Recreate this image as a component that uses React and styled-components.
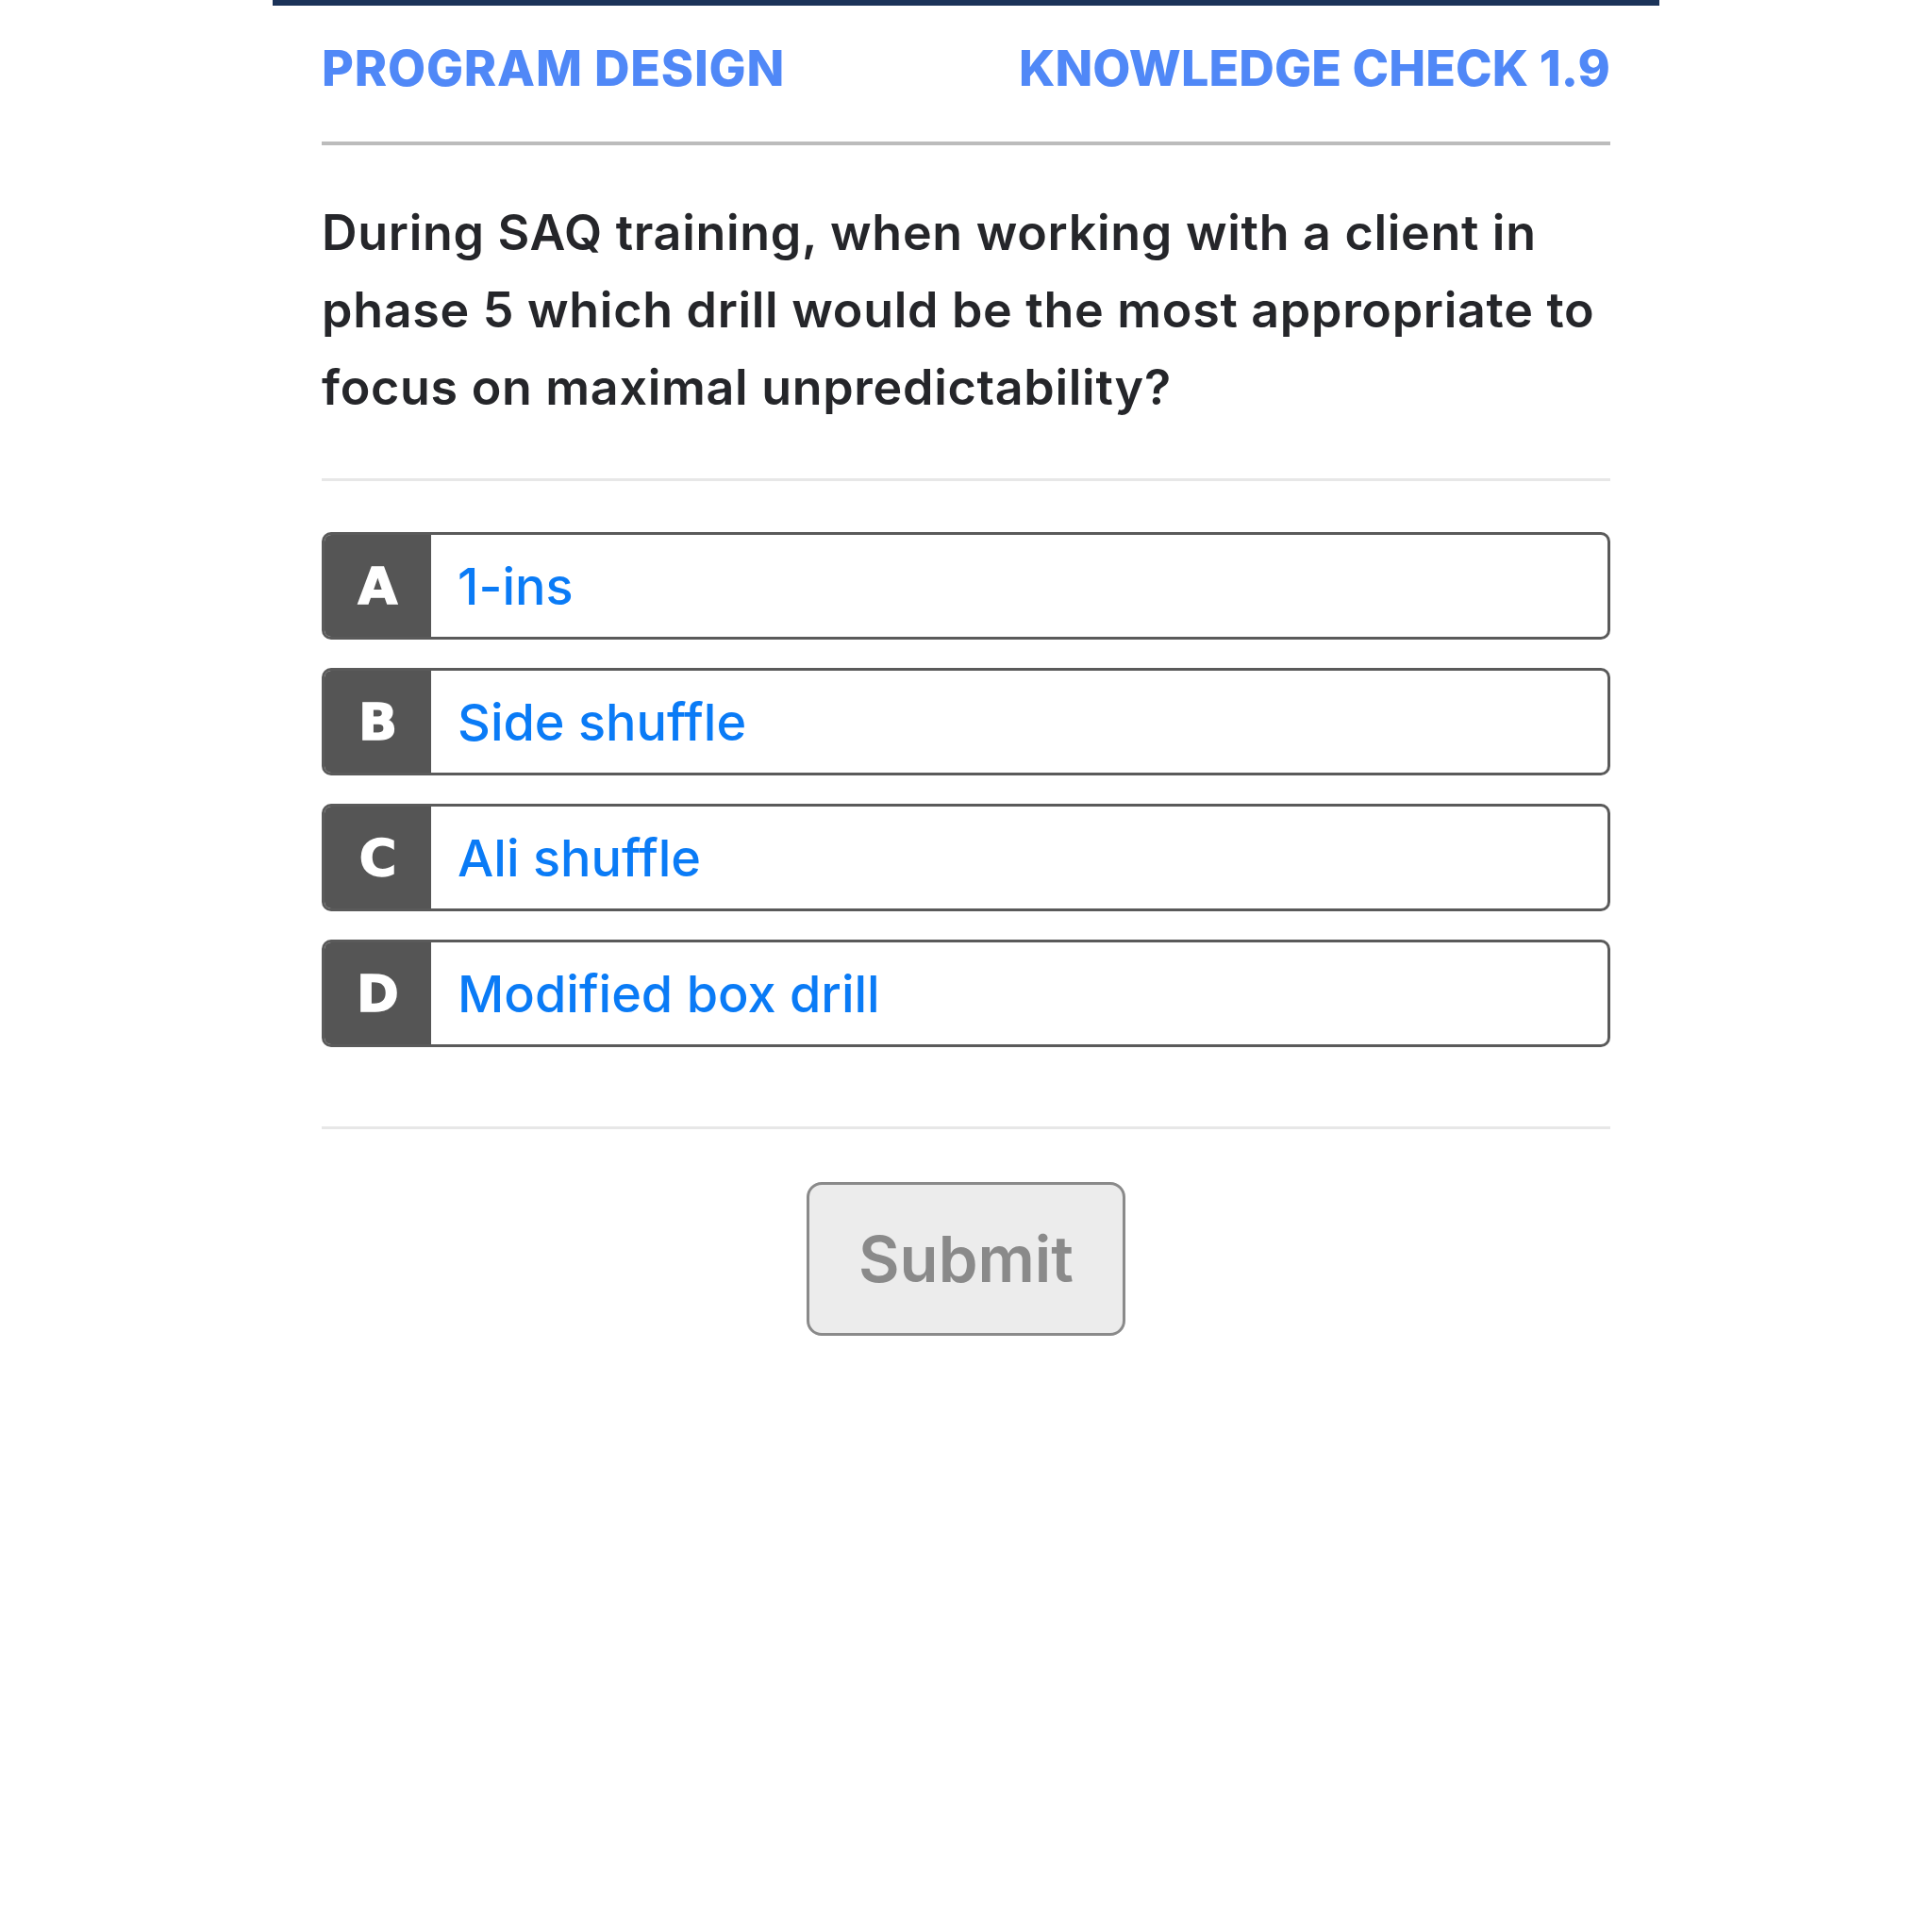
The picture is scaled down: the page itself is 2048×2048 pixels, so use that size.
import React from "react";
import styled, { createGlobalStyle } from "styled-components";

const Global = createGlobalStyle`
  html, body { margin: 0; padding: 0; background: #ffffff; }
  body { font-family: Inter, "Noto Sans", sans-serif; }
  * { box-sizing: border-box; }
`;

const Page = styled.div`
  width: 1470px;
  margin: 0 auto;
  border-top: 6px solid #1b3359;
  padding: 0 52px 120px;
`;

const Header = styled.header`
  display: flex;
  justify-content: space-between;
  align-items: center;
  padding: 35px 0 45px;
  border-bottom: 4px solid #bcbcbc;
`;

const HeaderTitle = styled.h1`
  margin: 0;
  font-family: Inter, "Noto Sans", sans-serif;
  font-weight: 800;
  font-size: 52px;
  line-height: 64px;
  letter-spacing: ${(p) => (p.$wide ? "0.8px" : "0.1px")};
  color: #5088f7;
  text-transform: uppercase;
`;

const Question = styled.p`
  margin: 0;
  padding: 52px 0 55px;
  font-family: Inter, "Noto Sans", sans-serif;
  font-weight: 600;
  font-size: 52px;
  line-height: 82px;
  letter-spacing: 0.7px;
  color: #25262a;
  border-bottom: 3px solid #e7e7e7;
`;

const OptionList = styled.div`
  display: flex;
  flex-direction: column;
  gap: 30px;
  padding: 54px 0 84px;
  border-bottom: 3px solid #e7e7e7;
`;

const Option = styled.button`
  display: flex;
  align-items: stretch;
  height: 114px;
  padding: 0;
  border: 3px solid #5a5a5a;
  border-radius: 10px;
  background: #ffffff;
  overflow: hidden;
  cursor: pointer;
  text-align: left;
`;

const Letter = styled.span`
  flex: 0 0 113px;
  display: flex;
  align-items: center;
  justify-content: center;
  background: #555555;
  color: #ffffff;
  font-family: "DejaVu Sans", sans-serif;
  font-weight: 700;
  font-size: 54px;
  -webkit-text-stroke: 1.5px #ffffff;
`;

const OptionText = styled.span`
  display: flex;
  align-items: center;
  padding-left: 28px;
  font-family: Inter, "Noto Sans", sans-serif;
  font-weight: 500;
  font-size: 54px;
  color: #0a7bf6;
`;

const Actions = styled.div`
  display: flex;
  justify-content: center;
  padding-top: 56px;
`;

const SubmitButton = styled.button`
  width: 338px;
  height: 163px;
  border: 3px solid #8a8a8a;
  border-radius: 16px;
  background: #ececec;
  color: #8a8a8a;
  font-family: Inter, "Noto Sans", sans-serif;
  font-weight: 600;
  font-size: 67px;
  cursor: default;
`;

const options = [
  { key: "A", text: "1-ins" },
  { key: "B", text: "Side shuffle" },
  { key: "C", text: "Ali shuffle" },
  { key: "D", text: "Modified box drill" },
];

export default function App() {
  return (
    <>
      <Global />
      <Page>
        <Header>
          <HeaderTitle $wide>Program Design</HeaderTitle>
          <HeaderTitle>Knowledge Check 1.9</HeaderTitle>
        </Header>
        <Question>
          During SAQ training, when working with a client in phase 5 which drill
          would be the most appropriate to focus on maximal unpredictability?
        </Question>
        <OptionList>
          {options.map((o) => (
            <Option key={o.key} type="button">
              <Letter>{o.key}</Letter>
              <OptionText>{o.text}</OptionText>
            </Option>
          ))}
        </OptionList>
        <Actions>
          <SubmitButton type="button">Submit</SubmitButton>
        </Actions>
      </Page>
    </>
  );
}
